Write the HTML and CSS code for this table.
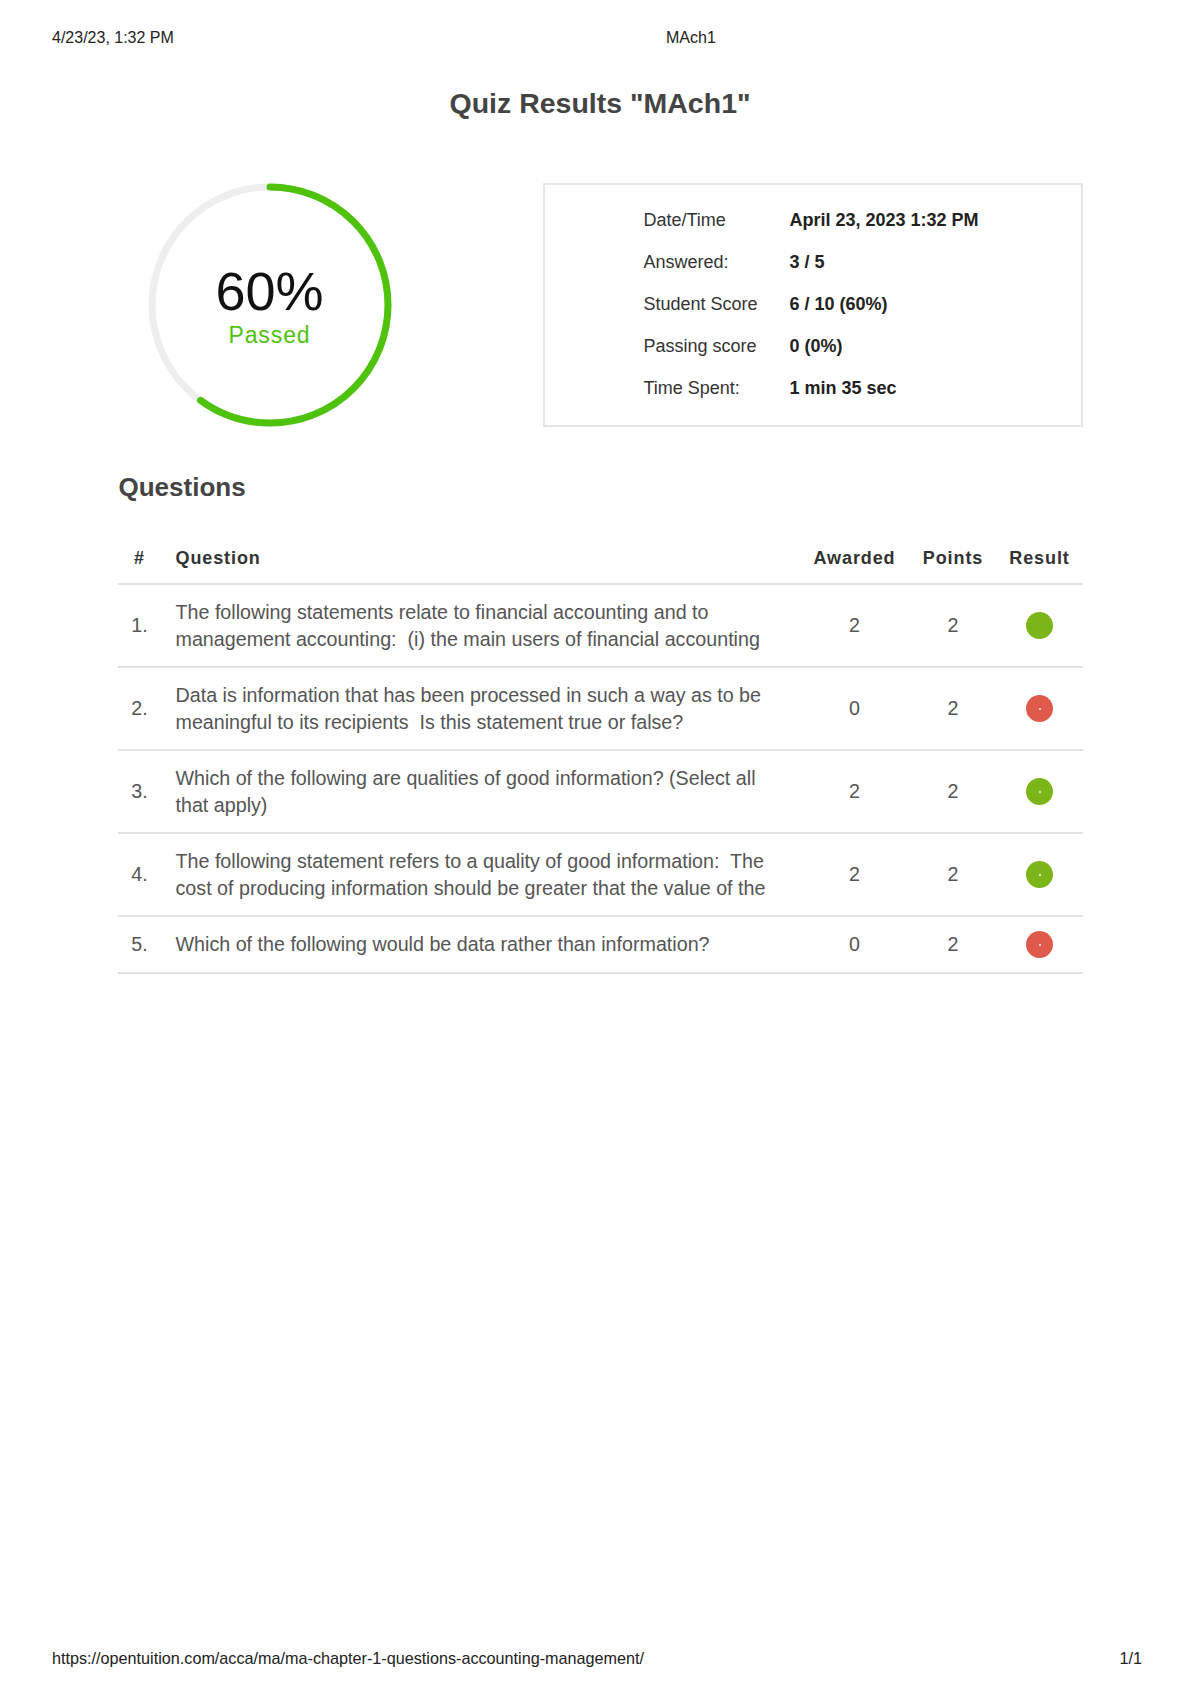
FILE: index.html
```html
<!DOCTYPE html>
<html lang="en">
<head>
<meta charset="utf-8">
<title>MAch1</title>
<link rel="stylesheet" href="styles.css">
</head>
<body>
<div class="page">
  <header class="print-head">
    <span class="ph-date">4/23/23, 1:32 PM</span>
    <span class="ph-title">MAch1</span>
  </header>

  <main class="content">
    <h1 class="title">Quiz Results "MAch1"</h1>

    <section class="summary">
      <div class="gauge">
        <svg class="gauge-svg" width="250" height="250" viewBox="0 0 250 250">
          <circle cx="125" cy="125" r="118" fill="none" stroke="#eeeeee" stroke-width="7"/>
          <circle cx="125" cy="125" r="118" fill="none" stroke="#4fc30c" stroke-width="7"
                  stroke-linecap="round" stroke-dasharray="444.8 741.4"
                  transform="rotate(-90 125 125)"/>
        </svg>
        <div class="gauge-text">
          <div class="pct">60%</div>
          <div class="status">Passed</div>
        </div>
      </div>

      <div class="info">
        <div class="info-grid">
          <div class="lbl">Date/Time</div><div class="val">April 23, 2023 1:32 PM</div>
          <div class="lbl">Answered:</div><div class="val">3 / 5</div>
          <div class="lbl">Student Score</div><div class="val">6 / 10 (60%)</div>
          <div class="lbl">Passing score</div><div class="val">0 (0%)</div>
          <div class="lbl">Time Spent:</div><div class="val">1 min 35 sec</div>
        </div>
      </div>
    </section>

    <h2 class="q-heading">Questions</h2>

    <div class="qtable">
      <div class="qrow qhead">
        <div class="c-num">#</div>
        <div class="c-q">Question</div>
        <div class="c-mid">Awarded</div>
        <div class="c-mid">Points</div>
        <div class="c-mid">Result</div>
      </div>

      <div class="qrow">
        <div class="c-num">1.</div>
        <div class="c-q"><span class="ln">The following statements relate to financial accounting and to</span><span class="ln">management accounting:&nbsp; (i) the main users of financial accounting</span></div>
        <div class="c-mid">2</div>
        <div class="c-mid">2</div>
        <div class="c-mid"><span class="dot ok"></span></div>
      </div>

      <div class="qrow">
        <div class="c-num">2.</div>
        <div class="c-q"><span class="ln">Data is information that has been processed in such a way as to be</span><span class="ln">meaningful to its recipients&nbsp; Is this statement true or false?</span></div>
        <div class="c-mid">0</div>
        <div class="c-mid">2</div>
        <div class="c-mid"><span class="dot bad pip"></span></div>
      </div>

      <div class="qrow">
        <div class="c-num">3.</div>
        <div class="c-q"><span class="ln">Which of the following are qualities of good information? (Select all</span><span class="ln">that apply)</span></div>
        <div class="c-mid">2</div>
        <div class="c-mid">2</div>
        <div class="c-mid"><span class="dot ok pip"></span></div>
      </div>

      <div class="qrow">
        <div class="c-num">4.</div>
        <div class="c-q"><span class="ln">The following statement refers to a quality of good information:&nbsp; The</span><span class="ln">cost of producing information should be greater that the value of the</span></div>
        <div class="c-mid">2</div>
        <div class="c-mid">2</div>
        <div class="c-mid"><span class="dot ok pip"></span></div>
      </div>

      <div class="qrow">
        <div class="c-num">5.</div>
        <div class="c-q"><span class="ln">Which of the following would be data rather than information?</span></div>
        <div class="c-mid">0</div>
        <div class="c-mid">2</div>
        <div class="c-mid"><span class="dot bad pip"></span></div>
      </div>
    </div>
  </main>

  <footer class="print-foot">
    <span>https://opentuition.com/acca/ma/ma-chapter-1-questions-accounting-management/</span>
    <span>1/1</span>
  </footer>
</div>
</body>
</html>
```

FILE: styles.css
```css
* { box-sizing: border-box; }

html, body {
  margin: 0;
  padding: 0;
  background: #ffffff;
}

body {
  font-family: "Liberation Sans", Arial, sans-serif;
  color: #222;
}

.page {
  width: 1200px;
  height: 1698px;
  display: flex;
  flex-direction: column;
}

/* print header / footer */
.print-head {
  display: flex;
  padding: 29px 0 0 52px;
  font-size: 16px;
  line-height: 18px;
  color: #222;
}
.ph-date { width: 614px; }

.print-foot {
  margin-top: auto;
  display: flex;
  justify-content: space-between;
  padding: 0 58px 31px 52px;
  font-size: 16.2px;
  line-height: 18px;
  color: #222;
}

/* main content */
.content {
  width: 965px;
  margin: 0 auto;
}

.title {
  margin: 40px 0 0;
  text-align: center;
  font-size: 28.5px;
  line-height: 33px;
  font-weight: bold;
  color: #444;
}

.summary {
  display: flex;
  align-items: flex-start;
  margin-top: 60px;
}

.gauge {
  display: grid;
  width: 250px;
  height: 250px;
  margin-left: 27px;
}
.gauge-svg,
.gauge-text {
  grid-area: 1 / 1;
}
.gauge-svg { display: block; }
.gauge-text {
  justify-self: center;
  align-self: start;
  padding-top: 84px;
  text-align: center;
}
.pct {
  font-size: 54px;
  line-height: 54px;
  color: #111;
}
.status {
  margin-top: 4px;
  font-size: 23px;
  line-height: 26px;
  letter-spacing: 0.9px;
  color: #4fc30c;
}

.info {
  margin-left: 148px;
  margin-top: 3px;
  width: 540px;
  height: 244px;
  border: 2px solid #e6e6e6;
  padding: 14px 0 0 99px;
}
.info-grid {
  display: grid;
  grid-template-columns: 146px auto;
  grid-auto-rows: 42px;
  align-items: center;
  font-size: 18px;
  line-height: 22px;
}
.lbl { color: #333; }
.val { color: #222; font-weight: bold; }

.q-heading {
  margin: 42px 0 0 1px;
  font-size: 26px;
  line-height: 30px;
  font-weight: bold;
  color: #444;
}

.qtable {
  margin-top: 43px;
}

.qrow {
  display: grid;
  grid-template-columns: 44px 638px 110px 87px 86px;
  align-items: center;
  padding: 14px 0;
  border-bottom: 2px solid #e2e2e2;
  font-size: 19.7px;
  line-height: 26.5px;
  color: #555;
}
.qrow.qhead {
  padding: 0 0 12px;
  font-size: 18px;
  font-weight: bold;
  color: #333;
  line-height: 26px;
  letter-spacing: 0.9px;
}

.c-num { text-align: center; }
.c-q { padding-left: 14px; }
.c-mid {
  display: flex;
  justify-content: center;
  align-items: center;
}
.ln {
  display: block;
  white-space: nowrap;
}

.dot {
  display: flex;
  align-items: center;
  justify-content: center;
  width: 27px;
  height: 27px;
  border-radius: 50%;
}
.dot.ok { background: #7cb518; }
.dot.bad { background: #df5a4a; }
.dot.pip::after {
  content: "";
  width: 2px;
  height: 2px;
  border-radius: 50%;
  background: #ffffff;
}
```
